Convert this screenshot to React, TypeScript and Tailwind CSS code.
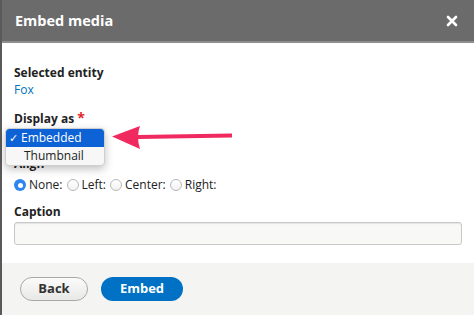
import React from 'react';

const Radio: React.FC<{ checked?: boolean; label: string }> = ({ checked, label }) => (
  <label className="flex items-center gap-[3px]">
    {checked ? (
      <span className="w-[12px] h-[12px] rounded-full bg-[#2f86f0] flex items-center justify-center">
        <span className="w-[5px] h-[5px] rounded-full bg-white" />
      </span>
    ) : (
      <span className="w-[12px] h-[12px] rounded-full border border-[#b8b8b8] bg-gradient-to-b from-white to-[#f2f2f2]" />
    )}
    <span>{label}</span>
  </label>
);

const App: React.FC = () => {
  return (
    <div className="relative w-[474px] h-[315px] overflow-hidden bg-white font-['Open_Sans','Liberation_Sans',sans-serif] text-[#222]">
      <div className="flex h-full">
        <div className="w-[2px] bg-[#5a5a5a]" />
        <div className="flex-1 flex flex-col">
          {/* title bar */}
          <div className="h-[43px] bg-[#6b6b6b] border-b-2 border-[#8d8d8d] flex items-center justify-between pl-[13px] pr-[16px]">
            <h2 className="text-white font-bold text-[14.5px]">Embed media</h2>
            <svg width="12" height="12" viewBox="0 0 12 12">
              <path d="M2 2 L10 10 M10 2 L2 10" stroke="white" strokeWidth="2.6" strokeLinecap="round" />
            </svg>
          </div>

          {/* body */}
          <div className="flex-1 px-[12px] pt-[21px] text-[12px]">
            <div className="font-bold leading-[18px]">Selected entity</div>
            <div className="text-[#0074bd] leading-[16px]">Fox</div>

            <div className="mt-[11px] font-bold leading-[18px]">
              Display as <span className="text-[#e3262b] text-[14px]">*</span>
            </div>
            <div className="h-[29px]" />
            <div className="font-bold leading-[14px]">Align</div>
            <div className="flex items-center gap-[4px] mt-[7px] h-[14px] text-[12px]">
              <Radio checked label="None:" />
              <Radio label="Left:" />
              <Radio label="Center:" />
              <Radio label="Right:" />
            </div>

            <div className="mt-[12px] font-bold leading-[16px]">Caption</div>
            <div className="mt-[2px] h-[23px] rounded-[3px] border border-[#c8c8c8] bg-[#f8f8f7] shadow-[inset_0_1px_1px_rgba(0,0,0,0.08)]" />
          </div>

          {/* footer */}
          <div className="h-[52px] bg-[#f4f4f2] flex items-center gap-[13px] pl-[18px] pb-[1px]">
            <button className="w-[68px] h-[24px] rounded-full border border-[#a9a9a9] bg-gradient-to-b from-[#fbfbfb] to-[#e8e8e6] text-[13px] font-bold text-[#333]">
              Back
            </button>
            <button className="w-[82px] h-[24px] rounded-full bg-[#0071c5] text-[13px] font-bold text-white">
              Embed
            </button>
          </div>
        </div>
      </div>

      {/* dropdown menu */}
      <div className="absolute left-[5px] top-[128px] w-[100px] rounded-[4px] bg-[#f7f7f7] border border-[#cfcfcf] shadow-[0_3px_8px_rgba(0,0,0,0.25)] text-[12px] overflow-hidden">
        <div className="h-[18px] bg-[#0d63d6] text-white flex items-center pl-[3px] rounded-t-[3px]">
          <span className="w-[12px] text-[11px]">✓</span>
          <span>Embedded</span>
        </div>
        <div className="h-[18px] flex items-center pl-[18px] text-[#222]">Thumbnail</div>
      </div>

      {/* arrow */}
      <svg className="absolute left-[110px] top-[122px]" width="126" height="30" viewBox="0 0 126 30">
        <path d="M28 13 L122 11.5 L122 15.5 L28 17 Z" fill="#f0295f" />
        <path d="M2 14.5 L30 4 Q26 14.5 30 27 Z" fill="#f0295f" />
      </svg>
    </div>
  );
};

export default App;
